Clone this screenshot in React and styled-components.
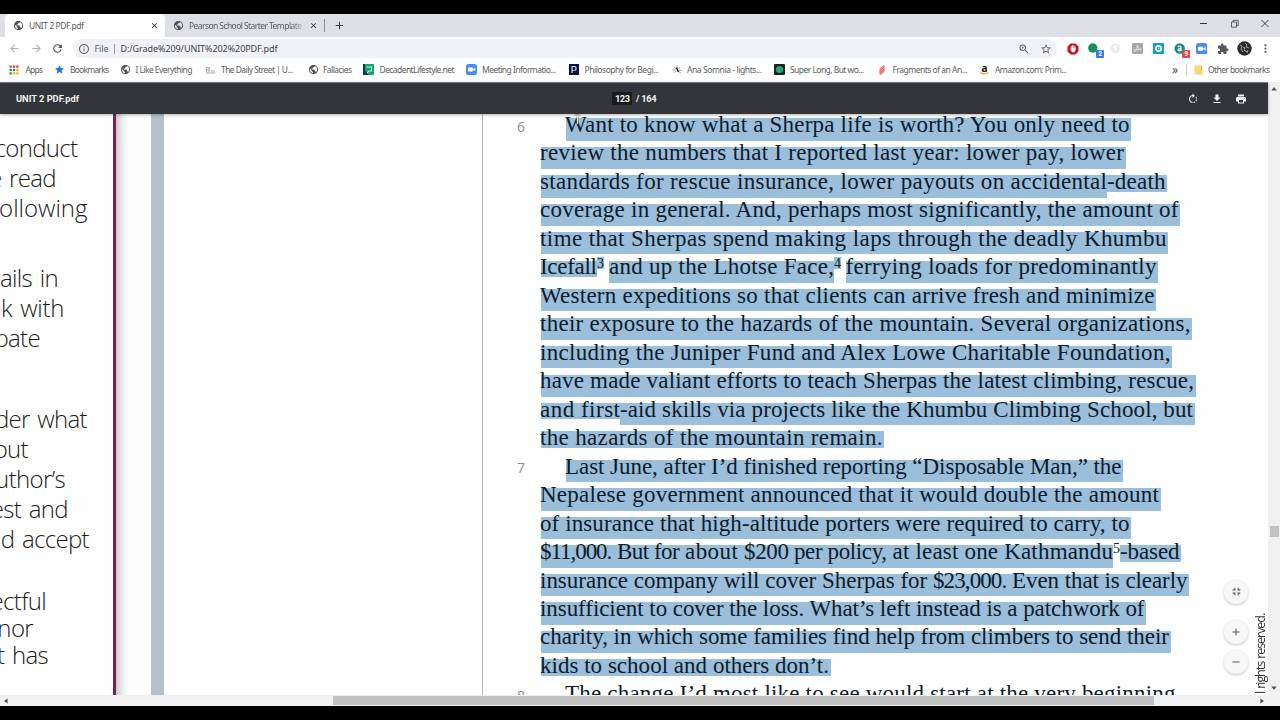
import React, { useLayoutEffect, useRef, useState } from "react";
import styled, { createGlobalStyle } from "styled-components";
import {
  MdPublic, MdArrowBack, MdArrowForward, MdRefresh, MdInfoOutline, MdZoomIn, MdStarBorder, MdStar,
  MdExtension, MdMoreVert, MdRotateRight, MdGetApp, MdPrint, MdFullscreenExit, MdAdd, MdRemove, MdClose,
} from "react-icons/md";

const Global = createGlobalStyle`
  *, *::before, *::after { box-sizing: border-box; }
  body { margin: 0; background: #000; overflow: hidden; }
  svg { display: block; flex: none; }
`;

const UI = `"Noto Sans", "Open Sans", sans-serif`;

const FitBox = styled.span`
  display: block;
  flex: none;
  width: ${(p) => p.$w}px;
  white-space: pre;
  font-variant-ligatures: none;
`;

/* Tracks its text so that it spans exactly the given width. */
function Fit({ w, children }) {
  const ref = useRef(null);
  const [spacing, setSpacing] = useState(0);
  useLayoutEffect(() => {
    const natural = ref.current.getBoundingClientRect().width;
    setSpacing((w - natural) / Math.max(1, children.length - 1));
  }, [w, children]);
  return (
    <FitBox $w={w}>
      <span ref={ref} style={{ letterSpacing: spacing }}>{children}</span>
    </FitBox>
  );
}

const Screen = styled.div`
  width: 1280px;
  height: 720px;
  padding: 14px 0;
  background: #000;
  display: flex;
  flex-direction: column;
  overflow: hidden;
  font-family: ${UI};
`;

const TabStrip = styled.div`
  flex: none;
  height: 23px;
  background: #dee0e5;
  display: flex;
  align-items: flex-start;
  padding-left: 5px;
`;

const Tab = styled.div`
  width: ${(p) => p.$w}px;
  height: 23px;
  display: flex;
  align-items: center;
  padding: 0 ${(p) => p.$right}px 1px 8px;
  gap: 5px;
  font-size: 8.5px;
  color: #5a5d62;
  background: ${(p) => (p.$active ? "#fff" : "transparent")};
  border-radius: 5px 5px 0 0;
  & > svg:last-child { margin-left: auto; }
`;

const FadedTitle = styled.div`
  width: 114px;
  overflow: hidden;
  mask-image: linear-gradient(to right, #000 90%, rgba(0, 0, 0, 0.3));
`;

const TabDivider = styled.div`
  width: 1px;
  height: 13px;
  margin: 5px 8px 0 0;
  background: #8b8e93;
`;

const NewTab = styled.div`
  padding-top: 5px;
  color: #3c4043;
`;

const WindowControls = styled.div`
  margin-left: auto;
  display: flex;
  gap: 22.5px;
  padding: 5px 11px 0 0;
`;

const Toolbar = styled.div`
  flex: none;
  height: 23px;
  background: #fff;
  display: flex;
  align-items: center;
  padding-left: 8px;
`;

const NavButton = styled.div`
  width: 21.5px;
  color: ${(p) => (p.$dim ? "#aeb1b5" : "#4b4f53")};
`;

const Omnibox = styled.div`
  width: 984px;
  height: 19px;
  border-radius: 10px;
  background: #f0f1f6;
  display: flex;
  align-items: center;
  padding: 0 5px;
  color: #5f6368;
  font-size: 9px;
`;

const OmniIcon = styled.div`
  width: 17px;
`;

const OmniDivider = styled.div`
  width: 1px;
  height: 10px;
  margin: 0 6px 0 5px;
  background: #9a9da2;
`;

const Url = styled.div`
  flex: 1;
  color: #3f4246;
`;

const OmniActions = styled.div`
  display: flex;
  gap: 10px;
`;

const Extensions = styled.div`
  display: flex;
  margin-left: 5.9px;
`;

const ExtSlot = styled.div`
  position: relative;
  width: 21.4px;
  height: 20px;
  display: flex;
  align-items: center;
  justify-content: center;
  color: #55585c;
`;

const Count = styled.span`
  position: absolute;
  left: ${(p) => p.$x}px;
  top: 11px;
  width: 8px;
  height: 8px;
  border-radius: 1px;
  background: ${(p) => p.$bg};
  color: #fff;
  font: 700 7px/8px Roboto, sans-serif;
  text-align: center;
`;

const Bookmarks = styled.div`
  flex: none;
  height: 22px;
  background: #fff;
  display: flex;
  align-items: center;
  padding: 0 0 3px 9px;
  font-size: 8.5px;
  color: #5a5d61;
`;

const Bookmark = styled.div`
  width: ${(p) => p.$w}px;
  display: flex;
  align-items: center;
`;

const IconSlot = styled.div`
  width: ${(p) => p.$w}px;
  flex: none;
`;

const Overflow = styled.div`
  margin-left: auto;
  width: 14px;
  font-size: 12px;
  line-height: 14px;
  color: #444;
`;

const BookmarkDivider = styled.div`
  width: 1px;
  height: 11px;
  margin-right: 7px;
  background: #c9cbcf;
`;

const Main = styled.div`
  flex: 1;
  min-height: 0;
  display: flex;
`;

const Viewer = styled.div`
  position: relative;
  width: 1268px;
  display: flex;
  flex-direction: column;
`;

const PdfBar = styled.div`
  flex: none;
  height: 32px;
  background: #323539;
  border-top: 1px solid #77797c;
  display: flex;
  align-items: center;
  padding: 0 21px 0 16px;
  font: 700 9.3px/12px Roboto, sans-serif;
  color: #f1f1f1;
  z-index: 2;
  box-shadow: 0 1px 3px rgba(0, 0, 0, 0.3);
`;

const PdfTitle = styled.div`
  width: 596px;
`;

const PageField = styled.div`
  width: 20px;
  height: 13px;
  padding: 1px 0 0 3px;
  margin-right: 4px;
  background: #191b1d;
`;

const PdfActions = styled.div`
  margin-left: auto;
  display: flex;
  gap: 12px;
`;

const Spread = styled.div`
  flex: 1;
  min-height: 0;
  background: #fefefe;
  display: flex;
  overflow: hidden;
`;

const LeftPage = styled.div`
  width: 113px;
  padding-top: 19px;
  overflow: hidden;
  font: 300 24px/30px "Open Sans", "Noto Sans", sans-serif;
  letter-spacing: -0.65px;
  word-spacing: 2px;
  color: #1c1c1c;
`;

const LeftLine = styled.div`
  width: ${(p) => p.$end}px;
  height: ${(p) => p.$h || 30}px;
  margin-top: ${(p) => p.$gap || 0}px;
  ${(p) => p.$track !== undefined && `letter-spacing: ${p.$track}px;`}
  display: flex;
  justify-content: flex-end;
  white-space: pre;
`;

const Edge = styled.div`
  width: 38px;
  border-left: 3px solid #752450;
  background: linear-gradient(to right, #c9c9cd 0, #ececef 6px, #fdfdfe 12px);
`;

const Gutter = styled.div`
  width: 13px;
  background: #b5c2ca;
`;

const Margin = styled.div`
  width: 319px;
  border-right: 1px solid #b0b5b9;
`;

const Article = styled.div`
  isolation: isolate;
  flex: 1;
  margin-top: -3px;
  font: 23px/28.48px "Liberation Serif", serif;
  color: #0d1c2b;
`;

const Line = styled.div`
  height: 28.48px;
  display: flex;
`;

const ParaNumber = styled.div`
  width: ${(p) => (p.$indent ? 82 : 57)}px;
  padding: 1.5px 0 0 34px;
  flex: none;
  font-family: "Open Sans", "Noto Sans", sans-serif;
  font-size: 14px;
  color: #8c8f92;
`;

const Segment = styled.span`
  position: relative;
  flex: none;
  width: ${(p) => p.$w}px;
  ${(p) => p.$mark && `
    &::before {
      content: "";
      position: absolute;
      z-index: -1;
      left: ${p.$first ? 1 : 0}px;
      right: 0;
      top: 7.3px;
      height: ${p.$mark}px;
      background: #9bbeda;
    }
  `}
`;

const Sup = styled(Segment)`
  font-size: 14px;
  line-height: 17px;
  padding-top: 2px;
  &::before { top: 4px; }
`;

const Copyright = styled.div`
  width: 14px;
  margin-left: auto;
  padding-top: 1px;
  writing-mode: vertical-rl;
  transform: rotate(180deg);
  font: 12.6px/14px "Open Sans", "Noto Sans", sans-serif;
  letter-spacing: -1.1px;
  word-spacing: 1px;
  color: #333;
  white-space: pre;
`;

const ZoomControls = styled.div`
  position: absolute;
  z-index: 3;
  right: 20px;
  top: 497.5px;
  display: flex;
  flex-direction: column;
`;

const RoundButton = styled.div`
  width: 24px;
  height: 24px;
  margin-bottom: ${(p) => p.$gap}px;
  border-radius: 50%;
  background: #f7f7f8;
  box-shadow: 0 1px 3px rgba(0, 0, 0, 0.22);
  display: flex;
  align-items: center;
  justify-content: center;
  color: #55585c;
`;

const TextCursor = styled.svg`
  position: absolute;
  z-index: 3;
  left: 573px;
  top: 32px;
`;

const HScroll = styled.div`
  flex: none;
  height: 11px;
  background: #f0f0f0;
  display: flex;
  align-items: center;
  justify-content: space-between;
  padding: 0 3px;
`;

const HThumb = styled.div`
  width: 821px;
  height: 9px;
  margin-left: 218px;
  background: #c1c1c1;
`;

const VScroll = styled.div`
  width: 12px;
  background: #f0f0f0;
  display: flex;
  flex-direction: column;
  align-items: center;
  padding: 4px 0 15px;
`;

const VThumb = styled.div`
  width: 9px;
  height: 11px;
  margin: 434px 0 auto;
  background: #c1c1c1;
`;

const Arrow = ({ turn = 0 }) => (
  <svg width="6" height="6" viewBox="0 0 6 6"><path d="M3 1L5.6 4.6H.4z" fill="#505050" transform={`rotate(${turn} 3 3)`} /></svg>
);

const AppsIcon = () => (
  <svg width="10" height="10" viewBox="0 0 10 10">
    {["#d93025", "#d93025", "#d93025", "#1e8e3e", "#1a73e8", "#f9ab00", "#1e8e3e", "#f9ab00", "#f9ab00"].map((c, i) => (
      <rect key={i} x={0.5 + (i % 3) * 3.4} y={0.5 + Math.floor(i / 3) * 3.4} width="2.2" height="2.2" fill={c} />
    ))}
  </svg>
);
const Globe = () => <MdPublic size={11} color="#505357" />;
const StreetIcon = () => (
  <svg width="10" height="8" viewBox="0 0 10 8" fill="none" stroke="#aaa"><path d="M.5 1v5.5M3 1v5.5M.5 1.5H4M.5 4H4M6 3.5v3M8 4v2.5M0 7h9.5" /></svg>
);
const DecadentIcon = () => (
  <svg width="11" height="11" viewBox="0 0 11 11"><rect width="11" height="11" rx="1" fill="#15a56c" /><path d="M0 0h2v7l3 2v2H0z" fill="#14344f" /><path d="M3.5 3h5v4H6L4 9" fill="none" stroke="#baf5dc" strokeWidth="1.1" /></svg>
);
const ZoomIcon = ({ size = 11 }) => (
  <svg width={size} height={size} viewBox="0 0 11 11"><rect width="11" height="11" rx="2.6" fill="#4a8cf0" /><rect x="2" y="3.5" width="4.8" height="4" rx=".8" fill="#fff" /><path d="M7.2 5L9.2 3.7v3.6L7.2 6z" fill="#fff" /></svg>
);
const PBadge = styled.div`
  width: 10.5px;
  height: 11px;
  background: #06104a;
  color: #fff;
  font: 9.5px/11px Roboto, sans-serif;
  text-align: center;
`;
const AnaIcon = () => (
  <svg width="10" height="9" viewBox="0 0 10 9" fill="none" stroke="#777" strokeWidth=".6"><path d="M5 0v3M2 2l2 2M0 5h4M1.5 8L4 6M8 2L6.5 4M7 5l3 .6M7 7l2.5 1.3" /><path d="M4.5 2.5L6.5 7" stroke="#111" strokeWidth="1.5" /></svg>
);
const SuperIcon = () => (
  <svg width="11" height="11" viewBox="0 0 11 11"><rect width="11" height="11" rx="1" fill="#182420" /><circle cx="5.5" cy="5.5" r="3.6" fill="#20a878" /></svg>
);
const FragmentsIcon = () => (
  <svg width="6" height="10" viewBox="0 0 6 10" fill="none" stroke="#d8474c"><path d="M1 3.5L5 .5v6L1 9.5zM1 5.5l4-3M1 7.5l4-3M3 2v6" strokeWidth=".9" /></svg>
);
const AmazonBadge = styled.div`
  width: 9px;
  height: 11px;
  color: #111;
  font: 700 10px/8px "Open Sans", sans-serif;
  text-align: center;
`;
const AmazonIcon = () => (
  <AmazonBadge>a<svg width="9" height="3" viewBox="0 0 9 3"><path d="M.3.5Q4.4 3.4 8.5.6" fill="none" stroke="#f29a1c" strokeWidth="1.2" /></svg></AmazonBadge>
);
const FolderIcon = () => (
  <svg width="9" height="10" viewBox="0 0 9 10"><path d="M.5.5h7v3l1 .8V9.5h-8z" fill="#f7d774" /><path d="M7.5.5v5" stroke="#e3bd4c" /></svg>
);

const bookmarks = [
  [AppsIcon, 16.5, "Apps", 17.5, 45],
  [() => <MdStar size={11} color="#1a73e8" />, 16, "Bookmarks", 39, 66],
  [Globe, 15.5, "I Like Everything", 57, 85.5],
  [StreetIcon, 15.5, "The Daily Street | U...", 72, 102],
  [Globe, 15.5, "Fallacies", 29, 55.5],
  [DecadentIcon, 16.5, "DecadentLifestyle.net", 75, 103],
  [ZoomIcon, 16, "Meeting Informatio...", 74, 102.5],
  [() => <PBadge>P</PBadge>, 16, "Philosophy for Begi...", 74.5, 103.5],
  [AnaIcon, 15, "Ana Somnia - lights...", 75, 102],
  [SuperIcon, 16, "Super Long, But wo...", 74, 105],
  [FragmentsIcon, 13.5, "Fragments of an An...", 75, 101],
  [AmazonIcon, 15, "Amazon.com: Prim...", 72, 100],
];

const extensions = [
  <svg width="12" height="12" viewBox="0 0 12 12"><path d="M3.6.5h4.8l3.1 3.1v4.8l-3.1 3.1H3.6L.5 8.4V3.6z" fill="#cc1219" /><path d="M4.2 5.5V3.5M5.5 5V2.7M6.8 5V2.9M8 5.5V3.8" stroke="#fff" strokeWidth="1" strokeLinecap="round" /><path d="M3.7 5h4.8v2.4L7.2 9.2H5.3L3.7 7.2z" fill="#fff" /></svg>,
  <><svg width="14" height="14" viewBox="0 0 14 14"><circle cx="5.8" cy="6" r="4.7" fill="#16915b" /></svg><Count $x={12.5} $bg="#3b78e7">2</Count></>,
  <svg width="11" height="11" viewBox="0 0 11 11"><circle cx="5.5" cy="5.5" r="5" fill="#ebebeb" /><path d="M3.5 4.5L5.5 3v5" fill="none" stroke="#fff" strokeWidth="1.4" /></svg>,
  <svg width="11" height="11" viewBox="0 0 11 11"><rect width="11" height="11" rx="1" fill="#a8a8a8" /><path d="M2 8.5C4.5 7 5.5 4.5 5.3 2.3c1 3 2 4 4 4.2-2.6-.4-5 .3-7.3 2z" fill="none" stroke="#eee" strokeWidth=".9" /></svg>,
  <svg width="11" height="11" viewBox="0 0 11 11"><rect width="11" height="11" fill="#129fc4" /><circle cx="5.5" cy="5.5" r="2.7" fill="none" stroke="#fff" strokeWidth="1.8" /><path d="M5 4.5l1.5 1-1.5 1z" fill="#fff" /></svg>,
  <><svg width="12" height="12" viewBox="0 0 12 12"><circle cx="5.7" cy="5.5" r="5.2" fill="#138a7c" /><path d="M3.8 4.2Q5.6 2.3 7 4v4M7 5.7Q3.7 5.6 4 7.3 5 8.6 7 7" fill="none" stroke="#fff" strokeWidth="1.2" /></svg><Count $x={13} $bg="#e3484c">9</Count></>,
  <ZoomIcon size={11.5} />,
  <MdExtension size={12} />,
  <svg width="15" height="15" viewBox="0 0 15 15"><circle cx="7.5" cy="7.5" r="7.2" fill="#292a2b" /><path d="M3 4l2 1-1 3 2 3M8 2l2 2-1 2 3 1M6 6l2 1-1 2 3 2M11 9l-1 3" fill="none" stroke="#a5a5a0" strokeWidth="1" /></svg>,
  <MdMoreVert size={13} />,
];

/* Each line: text, right edge, space above, height, tracking. */
const leftLines = [
  ["conduct", 77.5], ["e read", 56], ["ollowing", 87.5, 0, 30, 0],
  ["ails in", 58, 40], ["k with", 64, 0, 30, -0.3], ["pate", 40],
  ["der what", 87, 51], ["bout", 28], ["uthor’s", 65], ["est and", 68], ["nd accept", 89],
  ["ectful", 46, 31.5, 27.3], ["nor", 33, 0, 27.3], ["t has", 48, 0, 27.3],
];

/* Each segment: text, width, highlight height (0 for none), superscript flag. */
const FULL = 22.3;
const SHORT = 16.3;
const lines = [
  { no: "6", indent: true, s: [["Want to know what a Sherpa life is worth? You only need to", 566, FULL]] },
  { s: [["review the numbers that I reported last year: lower pay, lower", 585.5, FULL]] },
  { s: [["standards for rescue insurance, lower payouts on accidental", 567, FULL], ["-death", 60, SHORT]] },
  { s: [["coverage in general. And, perhaps most significantly, the amount of", 640, FULL]] },
  { s: [["time that Sherpas spend making laps through the deadly Khumbu", 628, FULL]] },
  { s: [["Icefall", 57, SHORT], ["3", 7, 12, true], [" ", 5, 0], ["and up the Lhotse Face,", 225, FULL], ["4", 7, 12, true], [" ", 4.5, 0], ["ferrying loads for predominantly", 312.5, FULL]] },
  { s: [["Western expeditions so that clients can arrive fresh and minimize", 616, FULL]] },
  { s: [["their exposure to the hazards of the mountain. Several organizations,", 652, FULL]] },
  { s: [["including the Juniper Fund and Alex Lowe Charitable Foundation,", 632, FULL]] },
  { s: [["have made valiant efforts to teach Sherpas the latest climbing, rescue,", 655.5, FULL]] },
  { s: [["and first", 80, SHORT], ["-aid skills via projects like the Khumbu Climbing School, but", 574.5, FULL]] },
  { s: [["the hazards of the mountain remain.", 344, SHORT]] },
  { no: "7", indent: true, s: [["Last June, after I’d finished reporting “Disposable Man,” the", 558, FULL]] },
  { s: [["Nepalese government announced that it would double the amount", 620.5, FULL]] },
  { s: [["of insurance that high-altitude porters were required to carry, to", 591, FULL]] },
  { s: [["$11,000. ", 77, FULL], ["But for ", 68, FULL], ["about ", 59, FULL], ["$200 per policy, ", 148.5, FULL], ["at least one Kathmandu", 220.5, FULL], ["5", 7, 0, true], ["-based", 61, SHORT]] },
  { s: [["insurance company will cover Sherpas for ", 393, FULL], ["$23,000. ", 79, FULL], ["Even that is clearly", 177, FULL]] },
  { s: [["insufficient to cover the loss. What’s left instead is a patchwork of", 606, FULL]] },
  { s: [["charity, in which some families find help from climbers to send their", 630.5, FULL]] },
  { s: [["kids to school and others don’t.", 290.5, SHORT]] },
  { no: "8", indent: true, s: [["The change I’d most like to see would start at the very beginning", 612, 0]] },
];

export default function App() {
  return (
    <Screen>
      <Global />
      <TabStrip>
        <Tab $active $w={160} $right={6}>
          <Globe />
          <Fit w={55}>UNIT 2 PDF.pdf</Fit>
          <MdClose size={9} color="#222" />
        </Tab>
        <Tab $w={159} $right={6}>
          <Globe />
          <FadedTitle><Fit w={113}>Pearson School Starter Template</Fit></FadedTitle>
          <MdClose size={9} color="#333" />
        </Tab>
        <TabDivider />
        <NewTab><MdAdd size={13} /></NewTab>
        <WindowControls>
          <svg width="8" height="9" viewBox="0 0 8 9"><path d="M0 4.5h7" stroke="#333" /></svg>
          <svg width="8" height="9" viewBox="0 0 8 9" fill="none" stroke="#444" strokeWidth=".8"><path d="M.5 3h5v5.2h-5zM2 3V1.3h5.2V6.5H5.6" /></svg>
          <svg width="8" height="9" viewBox="0 0 8 9"><path d="M.5 1L7.5 8M7.5 1L.5 8" stroke="#333" strokeWidth=".9" /></svg>
        </WindowControls>
      </TabStrip>
      <Toolbar>
        <NavButton $dim><MdArrowBack size={13} /></NavButton>
        <NavButton $dim><MdArrowForward size={13} /></NavButton>
        <NavButton><MdRefresh size={13} /></NavButton>
        <Omnibox>
          <OmniIcon><MdInfoOutline size={12} /></OmniIcon>
          <Fit w={14}>File</Fit>
          <OmniDivider />
          <Url><Fit w={157}>D:/Grade%209/UNIT%202%20PDF.pdf</Fit></Url>
          <OmniActions>
            <MdZoomIn size={12} />
            <MdStarBorder size={12} />
          </OmniActions>
        </Omnibox>
        <Extensions>
          {extensions.map((icon, i) => <ExtSlot key={i}>{icon}</ExtSlot>)}
        </Extensions>
      </Toolbar>
      <Bookmarks>
        {bookmarks.map(([Icon, slot, label, w, total]) => (
          <Bookmark key={label} $w={total}>
            <IconSlot $w={slot}><Icon /></IconSlot>
            <Fit w={w}>{label}</Fit>
          </Bookmark>
        ))}
        <Overflow>»</Overflow>
        <BookmarkDivider />
        <Bookmark $w={86}>
          <IconSlot $w={14}><FolderIcon /></IconSlot>
          <Fit w={62}>Other bookmarks</Fit>
        </Bookmark>
      </Bookmarks>
      <Main>
        <Viewer>
          <PdfBar>
            <PdfTitle><Fit w={63}>UNIT 2 PDF.pdf</Fit></PdfTitle>
            <PageField><Fit w={15}>123</Fit></PageField>
            <Fit w={20.5}>/ 164</Fit>
            <PdfActions>
              <MdRotateRight size={12} />
              <MdGetApp size={12} />
              <MdPrint size={12} />
            </PdfActions>
          </PdfBar>
          <Spread>
            <LeftPage>
              {leftLines.map(([text, end, gap, h, track]) => (
                <LeftLine key={text} $end={end} $gap={gap} $h={h} $track={track}>{text}</LeftLine>
              ))}
            </LeftPage>
            <Edge />
            <Gutter />
            <Margin />
            <Article>
              {lines.map((line, i) => (
                <Line key={i}>
                  <ParaNumber $indent={line.indent}>{line.no}</ParaNumber>
                  {line.s.map(([text, w, mark, sup], j) => {
                    const Part = sup ? Sup : Segment;
                    return (
                      <Part key={j} $w={w} $mark={mark} $first={j === 0}>
                        <Fit w={w - (j === line.s.length - 1 ? 1.5 : 0)}>{text}</Fit>
                      </Part>
                    );
                  })}
                </Line>
              ))}
            </Article>
            <Copyright>l rights reserved.</Copyright>
          </Spread>
          <HScroll>
            <Arrow turn={-90} />
            <HThumb />
            <Arrow turn={90} />
          </HScroll>
          <TextCursor width="9" height="11" viewBox="0 0 9 11" fill="none">
            <path d="M1.5 1h2l1 .8L5.5 1h2M4.5 1.8V10" stroke="#777" strokeWidth="2" />
            <path d="M1.5 1h2l1 .8L5.5 1h2M4.5 1.8V10" stroke="#eee" strokeWidth="1" />
          </TextCursor>
          <ZoomControls>
            <RoundButton $gap={16}><MdFullscreenExit size={13} /></RoundButton>
            <RoundButton $gap={6.5}><MdAdd size={12} /></RoundButton>
            <RoundButton $gap={0}><MdRemove size={12} /></RoundButton>
          </ZoomControls>
        </Viewer>
        <VScroll>
          <Arrow />
          <VThumb />
          <Arrow turn={180} />
        </VScroll>
      </Main>
    </Screen>
  );
}
